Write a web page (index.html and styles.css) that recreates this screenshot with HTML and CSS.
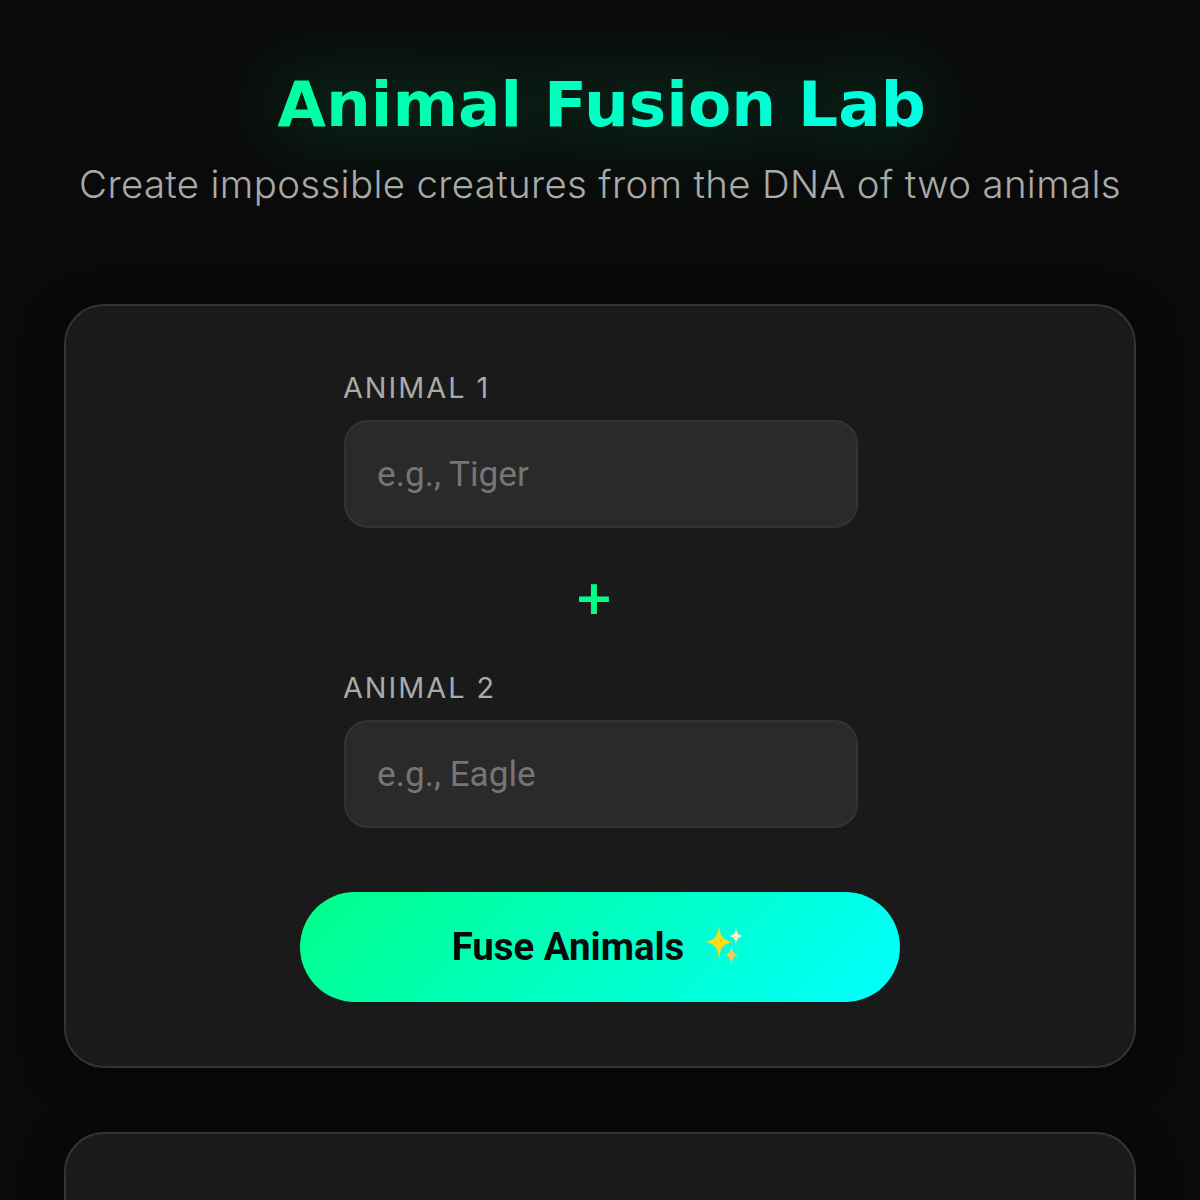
FILE: index.html
```html
<!DOCTYPE html>
<html lang="en">
<head>
  <meta charset="UTF-8">
  <meta name="viewport" content="width=device-width, initial-scale=1.0">
  <title>Animal Fusion Lab</title>
  <link rel="stylesheet" href="styles.css">
</head>
<body>
  <header class="header">
    <h1 class="title">Animal Fusion Lab</h1>
    <p class="subtitle">Create impossible creatures from the DNA of two animals</p>
  </header>

  <main class="content">
    <section class="card">
      <div class="field">
        <label class="field-label" for="animal1">ANIMAL 1</label>
        <input class="field-input" id="animal1" type="text" placeholder="e.g., Tiger">
      </div>
      <div class="plus">+</div>
      <div class="field">
        <label class="field-label" for="animal2">ANIMAL 2</label>
        <input class="field-input" id="animal2" type="text" placeholder="e.g., Eagle">
      </div>
      <button class="fuse-button" type="button">
        <span>Fuse Animals</span>
        <svg class="sparkles" viewBox="0 0 40 44" aria-hidden="true">
          <path fill="#ffdc14" d="M14 1 C15 12 17 16 28 18 C17 20 15 24 14 36 C13 24 11 20 0 18 C11 16 13 12 14 1 Z"/>
          <path fill="#fff3c4" d="M31 3 C31.500 9 33 11 38 12 C33 13 31.500 15 31 21 C30.500 15 29 13 24 12 C29 11 30.500 9 31 3 Z"/>
          <path fill="#ffc94d" d="M26.500 21 C27 28 29 30 33.500 31 C29 32 27 34 26.500 42 C26 34 24 32 19.500 31 C24 30 26 28 26.500 21 Z"/>
        </svg>
      </button>
    </section>

    <section class="card card-empty"></section>
  </main>
</body>
</html>
```

FILE: styles.css
```css
html {
  height: 1200px;
  overflow: hidden;
}
body {
  margin: 0;
  height: 1200px;
  overflow: hidden;
  background-color: #0a0a0a;
  font-family: Inter, "Liberation Sans", sans-serif;
  color: white;
}
.header {
  padding: 65px 64px 0;
  text-align: center;
}
.title {
  margin: 0;
  padding-left: 3px;
  font-family: "DejaVu Sans", sans-serif;
  font-size: 63px;
  line-height: 80px;
  font-weight: 700;
  background: linear-gradient(135deg, #00ff88, #00ffff);
  -webkit-background-clip: text;
  background-clip: text;
  color: transparent;
  filter: drop-shadow(0 0 40px rgba(0, 255, 136, 0.4));
}
.subtitle {
  margin: 0;
  padding-top: 14px;
  font-size: 38.4px;
  line-height: 50px;
  letter-spacing: 0.35px;
  font-weight: 300;
  color: #aaaaaa;
  white-space: nowrap;
}
.content {
  display: flex;
  flex-direction: column;
  gap: 64px;
  padding: 95px 64px 0;
}
.card {
  display: flex;
  flex-direction: column;
  align-items: center;
  background-color: #1a1a1a;
  border: 2px solid #333;
  border-radius: 40px;
  padding: 64px 0 64px;
  box-shadow: 0 10px 40px rgba(0, 0, 0, 0.5);
}
.card-empty {
  height: 400px;
  flex-shrink: 0;
}
.field {
  width: 514px;
  margin-left: 2px;
}
.field-label {
  display: block;
  margin-left: -1px;
  font-size: 28.8px;
  line-height: 36px;
  letter-spacing: 2px;
  color: #aaaaaa;
  margin-bottom: 14px;
}
.field-input {
  display: block;
  box-sizing: border-box;
  width: 100%;
  height: 108px;
  padding: 0 31px;
  background-color: #2a2a2a;
  border: 2px solid #333;
  border-radius: 24px;
  font-family: Roboto, sans-serif;
  font-size: 35.2px;
  color: white;
}
.field-input::placeholder {
  color: #757575;
  opacity: 1;
}
.plus {
  padding-right: 12px;
  font-size: 62px;
  line-height: 58px;
  font-weight: 450;
  color: #00ff88;
  margin: 38px 0 46px;
}
.fuse-button {
  display: flex;
  align-items: center;
  justify-content: center;
  gap: 21px;
  width: 600px;
  height: 110px;
  margin-top: 64px;
  padding: 0 3px 2px 0;
  border: none;
  border-radius: 55px;
  background: linear-gradient(135deg, #00ff88, #00ffff);
  font-family: Roboto, sans-serif;
  font-size: 38.4px;
  font-weight: 700;
  color: #0a0a0a;
  cursor: pointer;
}
.sparkles {
  width: 40px;
  height: 44px;
}
```
